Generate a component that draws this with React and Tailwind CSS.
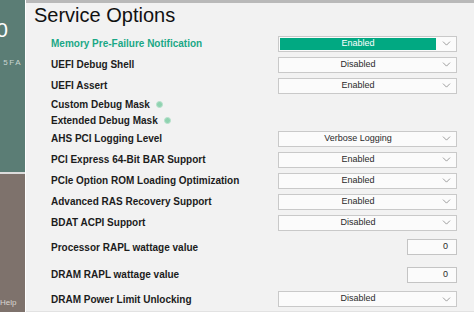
import { ChevronDown } from 'lucide-react'

const rows = [
  { label: 'Memory Pre-Failure Notification', kind: 'select', value: 'Enabled', h: 'h-[21px]', active: true },
  { label: 'UEFI Debug Shell', kind: 'select', value: 'Disabled', h: 'h-[21px]' },
  { label: 'UEFI Assert', kind: 'select', value: 'Enabled', h: 'h-[21px]' },
  { label: 'Custom Debug Mask', kind: 'dot', h: 'h-[16px]' },
  { label: 'Extended Debug Mask', kind: 'dot', h: 'h-[16px]' },
  { label: 'AHS PCI Logging Level', kind: 'select', value: 'Verbose Logging', h: 'h-[21px]' },
  { label: 'PCI Express 64-Bit BAR Support', kind: 'select', value: 'Enabled', h: 'h-[21px]' },
  { label: 'PCIe Option ROM Loading Optimization', kind: 'select', value: 'Enabled', h: 'h-[21px]' },
  { label: 'Advanced RAS Recovery Support', kind: 'select', value: 'Enabled', h: 'h-[21px]' },
  { label: 'BDAT ACPI Support', kind: 'select', value: 'Disabled', h: 'h-[21px]' },
  { label: 'Processor RAPL wattage value', kind: 'input', value: '0', h: 'h-[28px]' },
  { label: 'DRAM RAPL wattage value', kind: 'input', value: '0', h: 'h-[27px]' },
  { label: 'DRAM Power Limit Unlocking', kind: 'select', value: 'Disabled', h: 'h-[22px]' },
]

function SelectBox({ value, active }) {
  return (
    <div className="flex h-[16px] w-[179px] items-center border border-[#c9c9c9] bg-[#fbfbfb]">
      {active ? (
        <div className="ml-[1px] flex h-[12px] w-[156px] items-center justify-center bg-[#01a982] text-white">
          {value}
        </div>
      ) : (
        <div className="flex w-[158px] items-center justify-center text-[#2a2a2a]">{value}</div>
      )}
      <div className="flex flex-1 items-center justify-center">
        <ChevronDown size={13} strokeWidth={1.2} className="text-[#6a6a6a]" />
      </div>
    </div>
  )
}

export default function App() {
  return (
    <div
      className="flex h-[312px] w-[474px] overflow-hidden bg-[#f2f2f2]"
      style={{ fontFamily: '"Liberation Sans", Arial, sans-serif' }}
    >
      {/* Left nav strip */}
      <div className="flex w-[26px] shrink-0 flex-col border-r border-white">
        <div className="flex h-[172px] flex-col items-end overflow-hidden bg-[#5b7d75] text-white">
          <div className="mr-[17px] mt-[19px] text-[21px] leading-none">0</div>
          <div className="mt-[17px] pr-[3px] text-[8px] tracking-[1.5px] text-[#c9d6d2] whitespace-nowrap">5FA</div>
        </div>
        <div className="h-[2px] bg-[#dcdcdc]" />
        <div className="flex flex-1 flex-col justify-end overflow-hidden bg-[#7e726c]">
          <div className="mb-[3px] text-[8px] text-[#d9d4d1] whitespace-nowrap">Help</div>
        </div>
      </div>

      {/* Main content */}
      <div className="flex flex-1 flex-col border-t-[3px] border-b border-t-[#b9b9b9] border-b-[#e2e2e2]">
        <div className="h-[30px] shrink-0 pl-[8px] pt-[1px] text-[20px] leading-[22px] text-[#111]">Service Options</div>
        <div className="flex flex-col pl-[25px] pr-[17px]">
          {rows.map((r) => (
            <div key={r.label} className={`flex shrink-0 items-center justify-between ${r.h}`}>
              <div className="flex items-center gap-[6px]">
                <span
                  className={`text-[10px] font-bold whitespace-nowrap ${
                    r.active ? 'text-[#1aa886]' : 'text-[#1c1c1c]'
                  }`}
                >
                  {r.label}
                </span>
                {r.kind === 'dot' && (
                  <span className="h-[7px] w-[7px] rounded-full border border-[#b7e2cc] bg-[#8fd2b0]" />
                )}
              </div>
              <div className="text-[9px]">
                {r.kind === 'select' && <SelectBox value={r.value} active={r.active} />}
                {r.kind === 'input' && (
                  <div className="flex h-[16px] w-[50px] items-center justify-end border border-[#c4c4c4] bg-[#fbfbfb] pr-[8px] text-[#2a2a2a]">
                    {r.value}
                  </div>
                )}
              </div>
            </div>
          ))}
        </div>
      </div>
    </div>
  )
}
